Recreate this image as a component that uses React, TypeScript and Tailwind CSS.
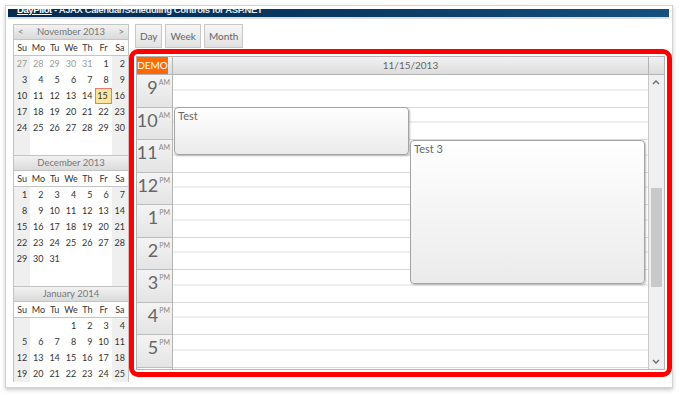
import React from 'react';

type Cell = { d: number; other?: boolean } | null;

interface MonthProps {
  title: string;
  rows: Cell[][];
  arrows?: boolean;
  today?: number;
}

const dayNames = ['Su', 'Mo', 'Tu', 'We', 'Th', 'Fr', 'Sa'];

function range(a: number, b: number): Cell[] {
  const out: Cell[] = [];
  for (let i = a; i <= b; i++) out.push({ d: i });
  return out;
}

const november: Cell[][] = [
  [{ d: 27, other: true }, { d: 28, other: true }, { d: 29, other: true }, { d: 30, other: true }, { d: 31, other: true }, { d: 1 }, { d: 2 }],
  range(3, 9),
  range(10, 16),
  range(17, 23),
  range(24, 30),
  [null, null, null, null, null, null, null],
];

const december: Cell[][] = [
  range(1, 7),
  range(8, 14),
  range(15, 21),
  range(22, 28),
  [...range(29, 31), null, null, null, null],
  [null, null, null, null, null, null, null],
];

const january: Cell[][] = [
  [null, null, null, ...range(1, 4)],
  range(5, 11),
  range(12, 18),
  range(19, 25),
  range(26, 31).concat([null]),
  [null, null, null, null, null, null, null],
];

function Month({ title, rows, arrows, today }: MonthProps) {
  return (
    <div>
      <div className="h-[16px] flex items-center justify-between px-[4px] bg-gradient-to-b from-[#f2f2f2] to-[#dadada] border-y border-[#c4c4c4] text-[9.5px] text-[#777]">
        <span className="w-[8px]">{arrows ? '<' : ''}</span>
        <span>{title}</span>
        <span className="w-[8px] text-right">{arrows ? '>' : ''}</span>
      </div>
      <div className="grid grid-cols-7 h-[16px] border-b border-[#c4c4c4] bg-white text-[9px] text-[#333]">
        {dayNames.map((n) => (
          <div key={n} className="flex items-center justify-center">
            {n}
          </div>
        ))}
      </div>
      {rows.map((row, ri) => (
        <div key={ri} className={'grid grid-cols-7 text-[9px] ' + (ri === 5 ? 'h-[19px]' : 'h-[16px]')}>
          {row.map((c, ci) => {
            const weekend = ci === 0 || ci === 6;
            const isToday = c && !c.other && c.d === today;
            return (
              <div
                key={ci}
                className={
                  'flex items-center justify-end pr-[3px] ' +
                  (isToday
                    ? 'bg-[#fde59c] border border-[#ec7a6a] '
                    : weekend
                    ? 'bg-[#efefef] '
                    : 'bg-white ') +
                  (c && c.other ? 'text-[#999]' : 'text-[#333]')
                }
              >
                {c ? c.d : ''}
              </div>
            );
          })}
        </div>
      ))}
    </div>
  );
}

const hours = [
  { h: '9', s: 'AM' },
  { h: '10', s: 'AM' },
  { h: '11', s: 'AM' },
  { h: '12', s: 'PM' },
  { h: '1', s: 'PM' },
  { h: '2', s: 'PM' },
  { h: '3', s: 'PM' },
  { h: '4', s: 'PM' },
  { h: '5', s: 'PM' },
];

function Chevron({ up }: { up?: boolean }) {
  return (
    <svg width="8" height="5" viewBox="0 0 8 5">
      <polyline
        points={up ? '1,4 4,1 7,4' : '1,1 4,4 7,1'}
        fill="none"
        stroke="#666"
        strokeWidth="1.3"
      />
    </svg>
  );
}

function CalendarDay() {
  return (
    <div className="h-full flex flex-col border border-[#b4b4b4] bg-white overflow-hidden">
      <div className="h-[18px] flex shrink-0 border-b border-[#b4b4b4] bg-gradient-to-b from-[#f2f2f2] to-[#dcdcdc]">
        <div className="w-[36px] border-r border-[#b4b4b4] flex">
          <div className="w-[31px] bg-[#ff6a00] text-white text-[10px] flex items-center justify-center">DEMO</div>
        </div>
        <div className="flex-1 flex items-center justify-center text-[10px] text-[#666]">11/15/2013</div>
        <div className="w-[16px] border-l border-[#b4b4b4]" />
      </div>
      <div className="flex flex-1 min-h-0">
        <div className="w-[36px] border-r border-[#b4b4b4] shrink-0">
          {hours.map((r) => (
            <div
              key={r.h}
              className="h-[32.5px] border-b border-[#bdbdbd] bg-gradient-to-b from-[#f4f4f4] to-[#e4e4e4] flex justify-end items-start pr-[2px] text-[#666]"
            >
              <span className="text-[18px] leading-[18px] mt-[3px]">{r.h}</span>
              <span className="text-[7px] leading-[7px] mt-[4px] ml-[1px] text-[#888]">{r.s}</span>
            </div>
          ))}
        </div>
        <div className="flex-1 relative">
          {hours.map((r) => (
            <div key={r.h} className="h-[32.5px] border-b border-[#dcdcdc]">
              <div className="h-1/2 border-b-2 border-[#efefef]" />
            </div>
          ))}
          <div className="absolute left-[1px] top-[32px] w-[235px] h-[48px] rounded-[4px] border border-[#a3a3a3] bg-gradient-to-b from-white to-[#ebebeb] shadow-[1px_1px_2px_rgba(0,0,0,0.25)] px-[3px] text-[11px] text-[#666] leading-[16px]">
            Test
          </div>
          <div className="absolute left-[237px] top-[65px] w-[235px] h-[144px] rounded-[4px] border border-[#a3a3a3] bg-gradient-to-b from-white to-[#ebebeb] shadow-[1px_1px_2px_rgba(0,0,0,0.25)] px-[3px] text-[11px] text-[#666] leading-[16px]">
            Test 3
          </div>
        </div>
        <div className="w-[16px] border-l border-[#c8c8c8] bg-[#f0f0f0] relative shrink-0">
          <div className="absolute top-[5px] left-[3px]">
            <Chevron up />
          </div>
          <div className="absolute left-[2px] top-[113px] w-[11px] h-[99px] bg-[#c9c9c9]" />
          <div className="absolute bottom-[5px] left-[3px]">
            <Chevron />
          </div>
        </div>
      </div>
    </div>
  );
}

export default function App() {
  return (
    <div className="w-[680px] h-[395px] bg-white p-[5px] overflow-hidden font-['Lato','Noto_Sans',sans-serif]">
      <div className="h-[383px] w-[668px] border border-[#d2d2d2] bg-white shadow-[0_2px_4px_rgba(0,0,0,0.22)] flex flex-col overflow-hidden">
        <div className="mt-[3px] ml-[2px] mr-[3px] h-[8px] shrink-0 overflow-hidden bg-gradient-to-r from-[#072a4f] via-[#0a3960] to-[#15507f]">
          <div className="-mt-[5px] pl-[9px] text-[9.5px] leading-[11px] tracking-[-0.4px] font-bold text-[#dfe9f3] whitespace-nowrap font-['Liberation_Sans',sans-serif]">
            <span className="underline text-white">DayPilot</span> - AJAX Calendar/Scheduling Controls for ASP.NET
          </div>
        </div>
        <div className="ml-[2px] mr-[3px] h-[2px] shrink-0 bg-[#dedede]" />
        <div className="flex flex-1 min-h-0 mt-[5px] pl-[7px]">
          <div className="w-[116px] border-x border-[#c4c4c4] overflow-hidden shrink-0 h-[358px]">
            <Month title="November 2013" rows={november} arrows today={15} />
            <Month title="December 2013" rows={december} />
            <Month title="January 2014" rows={january} />
          </div>
          <div className="flex-1 flex flex-col">
            <div className="h-[25px] flex gap-[3px] pl-[6px] shrink-0">
              {['Day', 'Week', 'Month'].map((t) => (
                <div
                  key={t}
                  className="h-[24px] px-[4px] flex items-center border border-[#c8c8c8] bg-gradient-to-b from-[#f6f6f6] to-[#e2e2e2] text-[10px] text-[#666]"
                >
                  {t}
                </div>
              ))}
            </div>
            <div className="h-[328px] border-[5px] border-[#ff0000] rounded-[9px] p-[2px]">
              <CalendarDay />
            </div>
          </div>
        </div>
      </div>
    </div>
  );
}
